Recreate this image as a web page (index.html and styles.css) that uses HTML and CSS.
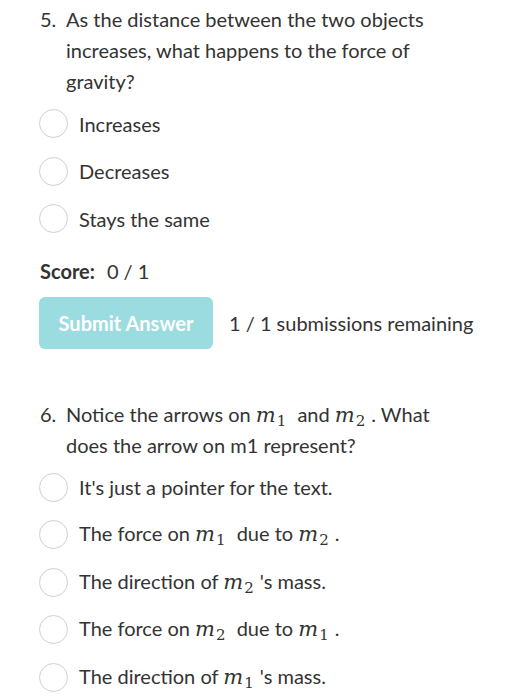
FILE: index.html
```html
<!DOCTYPE html>
<html>
<head>
<meta charset="utf-8">
<link rel="stylesheet" href="styles.css">
</head>
<body>
<div class="page">
  <div class="question">
    <div class="prompt"><span class="num">5.</span><span class="ptext">As the distance between the two objects increases, what happens to the force of gravity?</span></div>
    <div class="options">
      <div class="option"><span class="radio"></span><span class="label">Increases</span></div>
      <div class="option"><span class="radio"></span><span class="label">Decreases</span></div>
      <div class="option"><span class="radio"></span><span class="label">Stays the same</span></div>
    </div>
    <div class="score"><b>Score:</b><span class="sval">0 / 1</span></div>
    <div class="submit-row">
      <button class="submit">Submit Answer</button>
      <span class="remaining">1 / 1 submissions remaining</span>
    </div>
  </div>

  <div class="question q6">
    <div class="prompt"><span class="num">6.</span><span class="ptext">Notice the arrows on <span class="m">m<sub>1</sub></span> and <span class="m">m<sub>2</sub></span>. What does the arrow on m1 represent?</span></div>
    <div class="options">
      <div class="option"><span class="radio"></span><span class="label">It's just a pointer for the text.</span></div>
      <div class="option"><span class="radio"></span><span class="label">The force on <span class="m">m<sub>1</sub></span> due to <span class="m">m<sub>2</sub></span>.</span></div>
      <div class="option"><span class="radio"></span><span class="label">The direction of <span class="m">m<sub>2</sub></span>'s mass.</span></div>
      <div class="option"><span class="radio"></span><span class="label">The force on <span class="m">m<sub>2</sub></span> due to <span class="m">m<sub>1</sub></span>.</span></div>
      <div class="option"><span class="radio"></span><span class="label">The direction of <span class="m">m<sub>1</sub></span>'s mass.</span></div>
    </div>
  </div>
</div>
</body>
</html>
```

FILE: styles.css
```css
html, body {
  margin: 0;
  padding: 0;
  background: #ffffff;
}
body {
  font-family: Lato, "Liberation Sans", sans-serif;
  font-size: 20px;
  color: #333333;
}
.page {
  padding: 4px 20px 0 40px;
}
.prompt {
  display: flex;
  line-height: 31px;
}
.num {
  width: 26px;
  flex: none;
}
.ptext {
  flex: 1;
  padding-right: 42px;
}
.m {
  font-family: "DejaVu Serif", "Liberation Serif", serif;
  font-style: italic;
  font-size: 21px;
  line-height: 1;
  margin-right: 6px;
}
.m sub {
  display: inline-block;
  font-style: normal;
  font-size: 15px;
  line-height: 1;
  vertical-align: -4px;
  margin-left: 1px;
}
.options {
  display: flex;
  flex-direction: column;
  margin-top: 3px;
}
.option {
  display: flex;
  align-items: center;
  height: 47.5px;
}
.radio {
  width: 27px;
  height: 27px;
  border: 1.5px solid #cfcfcf;
  border-radius: 50%;
  flex: none;
  margin-left: -1px;
}
.label {
  margin-left: 11px;
}
.score {
  margin-top: 14px;
  line-height: 28px;
}
.score b {
  font-weight: 700;
}
.sval {
  margin-left: 12px;
}
.submit-row {
  display: flex;
  align-items: center;
  margin-top: 12px;
}
.submit {
  font-family: Lato, "Liberation Sans", sans-serif;
  font-weight: 700;
  font-size: 20px;
  color: #ffffff;
  background: #9adcdf;
  border: none;
  border-radius: 6px;
  width: 174px;
  height: 52px;
  margin-left: -1px;
  padding: 0;
}
.remaining {
  margin-left: 16px;
}
.q6 {
  margin-top: 50px;
}
```
